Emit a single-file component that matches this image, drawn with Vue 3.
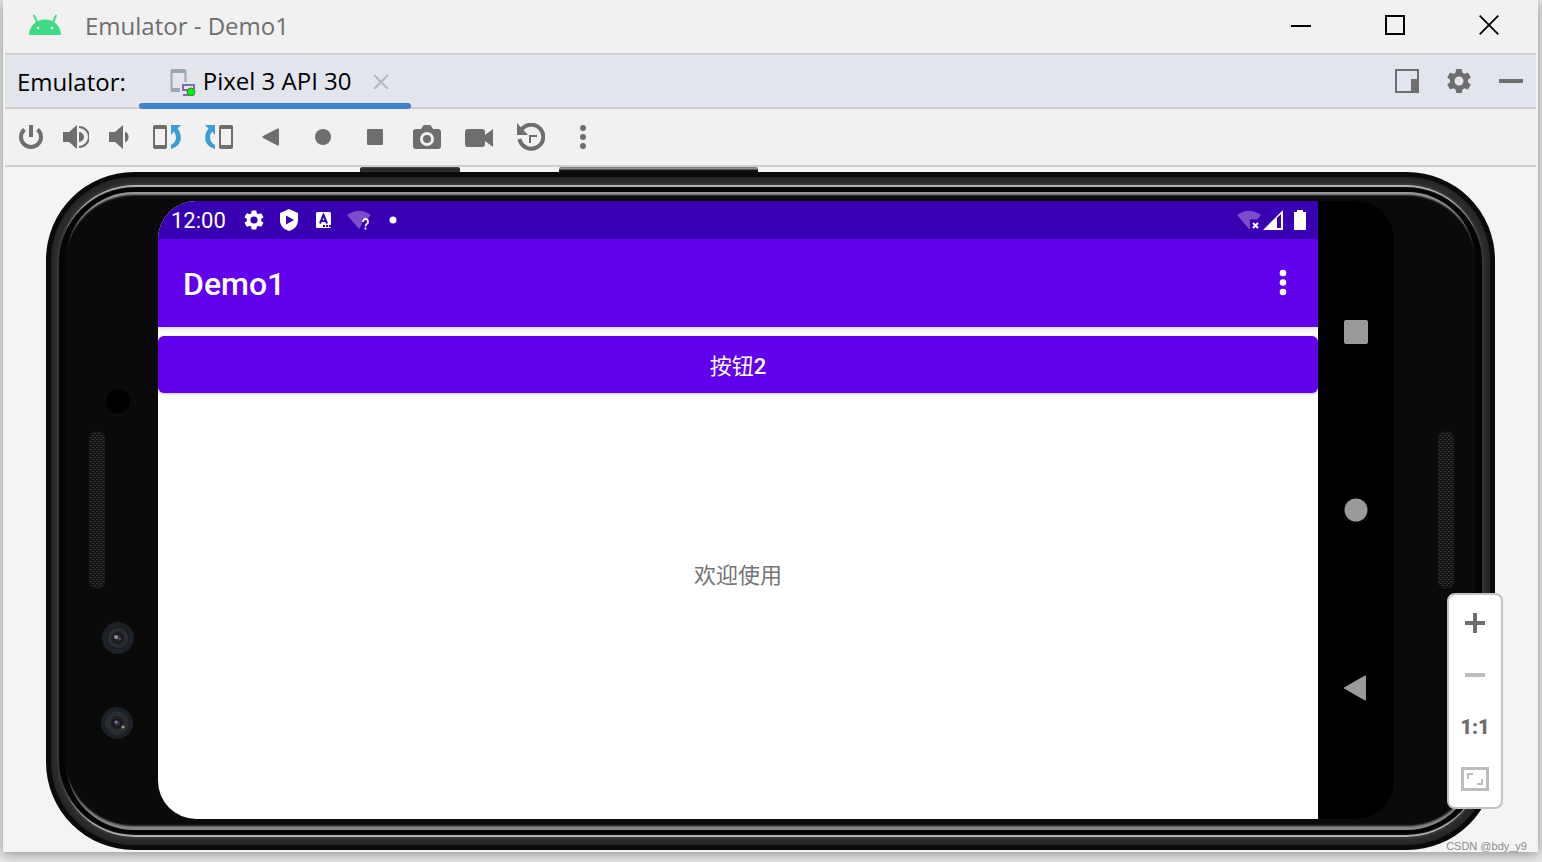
<script setup>
  import {ref} from "vue";

  const tabOpen = ref(true)
  const screenOn = ref(true)
  const deviceName = "Pixel 3 API 30"
</script>

<template>
  <main>
    <div class="window">
      <header class="titlebar">
        <svg class="logo" width="34" height="22" viewBox="0 0 34 22">
          <path d="M1 21a16 15.500 0 0 1 32 0z" fill="#3ddc84" />
          <path d="M9 8L6 1.500M25 8l3-6.500" stroke="#3ddc84" stroke-width="1.800" stroke-linecap="round" />
          <circle cx="10" cy="14" r="1.300" fill="#fff" />
          <circle cx="24" cy="14" r="1.300" fill="#fff" />
        </svg>
        <h1>Emulator - Demo1</h1>
        <div class="window-controls">
          <button aria-label="Minimize">
            <svg width="20" height="20" viewBox="0 0 20 20"><path d="M0 11h20" stroke="#000" stroke-width="2" /></svg>
          </button>
          <button aria-label="Maximize">
            <svg width="20" height="20" viewBox="0 0 20 20"><path d="M1 1h18v18H1z" fill="none" stroke="#000" stroke-width="2" /></svg>
          </button>
          <button aria-label="Close">
            <svg width="20" height="20" viewBox="0 0 20 20"><path d="M.7.7l18.600 18.600M19.300.7L.7 19.300" stroke="#000" stroke-width="1.800" /></svg>
          </button>
        </div>
      </header>

      <nav class="tabs">
        <span class="label">Emulator:</span>
        <div v-if="tabOpen" class="tab">
          <svg width="28" height="30" viewBox="0 0 28 30">
            <path d="M11 25H4a1.500 1.500 0 0 1-1.500-1.500v-18A1.500 1.500 0 0 1 4 4h11a1.500 1.500 0 0 1 1.500 1.500V16" fill="none" stroke="#9aa7b0" stroke-width="2" />
            <path d="M2 4h15v3H2zM2 22h9v4H2z" fill="#9aa7b0" />
            <path d="M14 19h11v4M14 18v6h5M14 29h6" fill="none" stroke="#8567b3" stroke-width="2" />
            <circle cx="22" cy="26" r="4" fill="#00f500" stroke="#4b7a4b" />
          </svg>
          <a href="#device">{{deviceName}}</a>
          <button aria-label="Close tab" @click="tabOpen = false">
            <svg width="16" height="16" viewBox="0 0 16 16"><path d="M1 2l14 14M15 2L1 16" stroke="#b3b8c2" stroke-width="2" /></svg>
          </button>
        </div>
        <div class="tab-actions">
          <button aria-label="View mode">
            <svg width="28" height="28" viewBox="0 0 28 28"><path d="M3 3h22v22H3z" fill="none" stroke="#6e6e6e" stroke-width="2" /><path d="M18 12h8v14h-8z" fill="#6e6e6e" /></svg>
          </button>
          <button aria-label="Settings">
            <svg width="30" height="30" viewBox="0 0 24 24"><path fill="#6e6e6e" d="M19.140 12.940c.04-.3.060-.61.060-.94 0-.32-.02-.64-.07-.94l2.030-1.580a.49.49 0 0 0 .12-.61l-1.920-3.320a.49.49 0 0 0-.59-.22l-2.390.96a7 7 0 0 0-1.620-.94l-.36-2.540a.48.48 0 0 0-.48-.41h-3.840a.47.47 0 0 0-.47.41l-.36 2.540c-.59.24-1.130.57-1.620.94l-2.390-.96a.48.48 0 0 0-.59.22L2.740 8.870a.47.47 0 0 0 .12.61l2.030 1.580c-.05.3-.09.63-.09.94s.02.64.07.94l-2.030 1.580a.49.49 0 0 0-.12.61l1.920 3.320c.12.22.37.29.59.22l2.390-.96c.5.38 1.030.7 1.620.94l.36 2.540c.05.24.24.41.48.41h3.840c.24 0 .44-.17.47-.41l.36-2.540c.59-.24 1.130-.56 1.620-.94l2.390.96c.22.08.47 0 .59-.22l1.920-3.320a.47.47 0 0 0-.12-.61zM12 15.600A3.600 3.600 0 1 1 12 8.400a3.600 3.600 0 0 1 0 7.200z" /></svg>
          </button>
          <button aria-label="Hide">
            <svg width="28" height="28" viewBox="0 0 28 28"><path d="M2 14h24" stroke="#6e6e6e" stroke-width="4" /></svg>
          </button>
        </div>
      </nav>

      <div class="toolbar">
        <div class="group">
          <button aria-label="Power" @click="screenOn = !screenOn">
            <svg width="28" height="28" viewBox="0 0 28 28" fill="none" stroke="#6e6e6e" stroke-width="4"><path d="M14 2v12" /><path d="M7.500 6.500a10 10 0 1 0 13 0" /></svg>
          </button>
          <button aria-label="Volume up">
            <svg width="28" height="28" viewBox="0 0 28 28"><path d="M2 9h6l8-7v24l-8-7H2zM18 9a5 5 0 0 1 0 10z" fill="#6e6e6e" /><path d="M18 4a10 10 0 0 1 0 20" fill="none" stroke="#6e6e6e" stroke-width="2" /></svg>
          </button>
          <button aria-label="Volume down">
            <svg width="28" height="28" viewBox="0 0 28 28"><path d="M4 9h6l8-7v24l-8-7H4zM20 8.500a6 6 0 0 1 0 11z" fill="#6e6e6e" /></svg>
          </button>
        </div>
        <div class="group wide">
          <button aria-label="Rotate left">
            <svg width="30" height="28" viewBox="0 0 30 28"><path d="M2 4h12v20H2z" fill="none" stroke="#6e6e6e" stroke-width="2" /><path d="M1 4a2 2 0 0 1 2-2h10a2 2 0 0 1 2 2v2H1zM1 22h14v2a2 2 0 0 1-2 2H3a2 2 0 0 1-2-2z" fill="#6e6e6e" /><path d="M19 2h10l-3.500 3.500c5 6 5.500 17-6.500 20.500v-4c6-3 6-9 3-13.500L19 12z" fill="#389fd6" /></svg>
          </button>
          <button aria-label="Rotate right">
            <svg width="30" height="28" viewBox="0 0 30 28"><path d="M16 4h12v20H16z" fill="none" stroke="#6e6e6e" stroke-width="2" /><path d="M15 4a2 2 0 0 1 2-2h10a2 2 0 0 1 2 2v2H15zM15 22h14v2a2 2 0 0 1-2 2H17a2 2 0 0 1-2-2z" fill="#6e6e6e" /><path d="M11 2H1l3.500 3.500C-.5 11.500-1 22.500 11 26v-4C5 19 5 13 8 8.500l3 3.500z" fill="#389fd6" /></svg>
          </button>
          <button aria-label="Back">
            <svg width="28" height="28" viewBox="0 0 28 28"><path d="M6.500 14L21 6.500v15z" fill="#6e6e6e" stroke="#6e6e6e" stroke-width="2" stroke-linejoin="round" /></svg>
          </button>
          <button aria-label="Home">
            <svg width="28" height="28" viewBox="0 0 28 28"><circle cx="14" cy="14" r="8" fill="#6e6e6e" /></svg>
          </button>
          <button aria-label="Overview">
            <svg width="28" height="28" viewBox="0 0 28 28"><rect x="6" y="6" width="16" height="16" rx="1" fill="#6e6e6e" /></svg>
          </button>
          <button aria-label="Screenshot">
            <svg width="28" height="28" viewBox="0 0 28 28"><path d="M3 6h5l2-3.200Q10.500 2 11.500 2h5q1 0 1.500.8L20 6h5a3 3 0 0 1 3 3v14a3 3 0 0 1-3 3H3a3 3 0 0 1-3-3V9a3 3 0 0 1 3-3z" fill="#6e6e6e" /><circle cx="14" cy="16" r="5.500" fill="#6e6e6e" stroke="#f1f1f1" stroke-width="3" /></svg>
          </button>
          <button aria-label="Record">
            <svg width="28" height="28" viewBox="0 0 28 28"><path d="M3 6h14a3 3 0 0 1 3 3v3l8-6v18l-8-6v3a3 3 0 0 1-3 3H3a3 3 0 0 1-3-3V9a3 3 0 0 1 3-3z" fill="#6e6e6e" /></svg>
          </button>
          <button aria-label="Snapshots">
            <svg width="28" height="28" viewBox="0 0 28 28"><path d="M4 7.500A12 12 0 1 1 2.500 16" fill="none" stroke="#6e6e6e" stroke-width="4" /><path d="M0 0l4 4.500 7 7.500H0z" fill="#6e6e6e" /><path d="M13 20v-7h7" fill="none" stroke="#6e6e6e" stroke-width="2" /></svg>
          </button>
          <button aria-label="More">
            <svg width="28" height="28" viewBox="0 0 28 28" fill="#6e6e6e"><circle cx="14" cy="5" r="3" /><circle cx="14" cy="14" r="3" /><circle cx="14" cy="23" r="3" /></svg>
          </button>
        </div>
      </div>

      <section class="stage">
        <div class="side-keys"><i class="power-key"></i><i class="volume-key"></i></div>
        <div class="phone">
          <div class="frame">
            <div class="rim">
              <div class="glass">
                <svg class="bezel" width="92" height="618" viewBox="0 0 92 618">
                  <defs>
                    <pattern id="mesh" width="4" height="4" patternUnits="userSpaceOnUse">
                      <rect width="4" height="4" fill="#131313" />
                      <path d="M0 0h2v1H0zM2 2h2v1H2z" fill="#393939" />
                    </pattern>
                    <radialGradient id="lens">
                      <stop offset="0" stop-color="#49495a" />
                      <stop offset=".35" stop-color="#17181d" />
                      <stop offset=".8" stop-color="#303134" />
                      <stop offset="1" stop-color="#15181b" />
                    </radialGradient>
                  </defs>
                  <circle cx="52" cy="200" r="12" fill="#000" />
                  <rect x="23.500" y="231" width="15" height="156" rx="6" fill="url(#mesh)" stroke="#1c1c1c" />
                  <circle cx="52" cy="437" r="16" fill="#1b2126" />
                  <circle cx="52" cy="437" r="11" fill="url(#lens)" />
                  <circle cx="50" cy="436" r="2" fill="#8d8d9c" />
                  <circle cx="54" cy="438" r="1" fill="#55557a" />
                  <circle cx="51" cy="522" r="16" fill="#1b2126" />
                  <circle cx="51" cy="522" r="11" fill="url(#lens)" stroke="#35383b" />
                  <circle cx="50" cy="521" r="1.500" fill="#8080b5" />
                  <circle cx="57" cy="526" r="1.500" fill="#ad9896" />
                </svg>
                <div class="screen">
                  <div class="statusbar">
                    <span class="clock">12:00</span>
                    <div class="notifications">
                      <svg width="24" height="24" viewBox="0 0 24 24"><path fill="#fff" d="M19.140 12.940c.04-.3.060-.61.060-.94 0-.32-.02-.64-.07-.94l2.030-1.580a.49.49 0 0 0 .12-.61l-1.920-3.320a.49.49 0 0 0-.59-.22l-2.390.96a7 7 0 0 0-1.620-.94l-.36-2.540a.48.48 0 0 0-.48-.41h-3.840a.47.47 0 0 0-.47.41l-.36 2.540c-.59.24-1.130.57-1.620.94l-2.390-.96a.48.48 0 0 0-.59.22L2.740 8.870a.47.47 0 0 0 .12.61l2.030 1.580c-.05.3-.09.63-.09.94s.02.64.07.94l-2.030 1.580a.49.49 0 0 0-.12.61l1.920 3.320c.12.22.37.29.59.22l2.390-.96c.5.38 1.030.7 1.620.94l.36 2.540c.05.24.24.41.48.41h3.840c.24 0 .44-.17.47-.41l.36-2.540c.59-.24 1.130-.56 1.620-.94l2.390.96c.22.08.47 0 .59-.22l1.920-3.320a.47.47 0 0 0-.12-.61zM12 15.600A3.600 3.600 0 1 1 12 8.400a3.600 3.600 0 0 1 0 7.200z" /></svg>
                      <svg width="24" height="24" viewBox="0 0 24 24"><path d="M12 1l9 4v7c0 6-4 9.500-9 11-5-1.500-9-5-9-11V5z" fill="#fff" /><path d="M9 7.500l8 4.500-8 4.500z" fill="#3700b3" /></svg>
                      <svg width="24" height="24" viewBox="0 0 24 24"><rect x="4" y="4" width="15" height="16" rx="1.500" fill="#fff" /><path d="M8 15.500L11.500 7l3.500 8.500M9.500 13h4" fill="none" stroke="#3700b3" stroke-width="2" /><path d="M11 17h2v2h-2zM14 17h2v2h-2zM17 17h2v2h-2z" fill="#3700b3" /></svg>
                      <svg width="24" height="24" viewBox="0 0 24 24"><path d="M0 7q12-8.500 24 0l-3 3.500h-6v6L12 21z" fill="#7c4ccd" /><path d="M16 14q0-3 2.500-3T21 14q0 1.300-1.500 2.300-1 .7-1 2M18.500 19.500v2" fill="none" stroke="#fff" stroke-width="1.800" /></svg>
                      <svg width="24" height="24" viewBox="0 0 24 24"><circle cx="11" cy="12" r="3.500" fill="#fff" /></svg>
                    </div>
                    <svg class="signals" width="70" height="24" viewBox="0 0 70 24">
                      <path d="M0 7q12-8.500 24 0l-4 4.500h-7v9.500h-1z" fill="#7c4ccd" />
                      <path d="M16 15l5 5M21 15l-5 5" stroke="#fff" stroke-width="2" />
                      <path d="M46 2v20H26z" fill="#fff" />
                      <path d="M40 10l4-4v14h-4z" fill="#3700b3" />
                      <path d="M57 4h3V2h6v2h3v18H57z" fill="#fff" />
                    </svg>
                  </div>
                  <div class="appbar">
                    <h2>Demo1</h2>
                    <button aria-label="More options">
                      <svg width="24" height="28" viewBox="0 0 24 28" fill="#fff"><circle cx="12" cy="4" r="3.300" /><circle cx="12" cy="13.500" r="3.300" /><circle cx="12" cy="23" r="3.300" /></svg>
                    </button>
                  </div>
                  <div class="content">
                    <button><span>按钮<b>2</b></span></button>
                    <p v-if="screenOn">欢迎使用</p>
                  </div>
                </div>
                <div class="navbar">
                  <button aria-label="Recent apps">
                    <svg width="26" height="26" viewBox="0 0 26 26"><rect x="1" y="1" width="24" height="24" rx="2" fill="#9a9a9a" /></svg>
                  </button>
                  <button aria-label="Device home">
                    <svg width="26" height="26" viewBox="0 0 26 26"><circle cx="13" cy="13" r="11.500" fill="#9a9a9a" /></svg>
                  </button>
                  <button aria-label="Device back">
                    <svg width="26" height="26" viewBox="0 0 26 26"><path d="M2 13L22 1.500v23z" fill="#9a9a9a" stroke="#9a9a9a" stroke-width="2" stroke-linejoin="round" /></svg>
                  </button>
                </div>
                <svg class="bezel" width="81" height="618" viewBox="0 0 81 618">
                  <rect x="44.500" y="231" width="15" height="156" rx="6" fill="url(#mesh)" stroke="#1c1c1c" />
                </svg>
              </div>
            </div>
          </div>
        </div>

        <div class="zoom">
          <button aria-label="Zoom in">
            <svg width="28" height="28" viewBox="0 0 28 28"><path d="M4 14h20M14 4v20" stroke="#6e6e6e" stroke-width="4" /></svg>
          </button>
          <button aria-label="Zoom out">
            <svg width="28" height="28" viewBox="0 0 28 28"><path d="M4 14h20" stroke="#bdbdbd" stroke-width="4" /></svg>
          </button>
          <button>1:1</button>
          <button aria-label="Fit">
            <svg width="28" height="28" viewBox="0 0 28 28" fill="none" stroke="#bdbdbd"><path d="M1.500 3.500h25v21h-25z" stroke-width="3" /><path d="M7 14V9h5M21 14v5h-5" stroke-width="2" /></svg>
          </button>
        </div>
        <small>CSDN @bdy_y9</small>
      </section>
    </div>
  </main>
</template>

<style>
  body {
    margin: 0;
    background-color: #e9e9e9;
  }
</style>

<style scoped>
  main {
    min-height: 100vh;
    padding: 0 4px 10px 3px;
    box-sizing: border-box;
    display: flex;
    font-family: "Open Sans", "Noto Sans CJK SC", sans-serif;
  }

  button {
    border: none;
    padding: 0;
    background: none;
    display: flex;
    align-items: center;
    justify-content: center;
    font-family: inherit;
    cursor: pointer;
  }

  svg {
    display: block;
    flex-shrink: 0;
  }

  .window {
    flex: 1;
    display: flex;
    flex-direction: column;
    padding: 0 2px;
    background-color: #f1f1f1;
    box-shadow: 0 2px 12px rgba(0, 0, 0, 0.4);
  }

  .titlebar {
    display: flex;
    align-items: center;
    height: 50px;
    padding: 0 0 3px 23px;
    border-bottom: 2px solid #d0d0d0;
  }

  h1 {
    margin: 0 0 0 23px;
    font-size: 24px;
    font-weight: 400;
    color: #6e6e6e;
  }

  .window-controls {
    display: flex;
    margin-left: auto;
  }

  .window-controls button {
    width: 94px;
    height: 50px;
  }

  .tabs {
    display: flex;
    height: 52px;
    padding: 0 11px 0 12px;
    background-color: #e2e5ec;
    border-bottom: 2px solid #d0d0d0;
    font-size: 24px;
    line-height: 54px;
  }

  .tab {
    display: flex;
    align-items: center;
    position: relative;
    margin-left: 13px;
    padding: 0 22px 0 30px;
  }

  .tab::after {
    content: "";
    position: absolute;
    left: 0;
    right: 0;
    bottom: -2px;
    height: 6px;
    border-radius: 3px;
    background-color: #4083c9;
  }

  .tab a {
    margin: 0 21px 0 6px;
    color: #000;
    text-decoration: none;
  }

  .tab-actions {
    display: flex;
    gap: 24px;
    margin-left: auto;
  }

  .tab-actions button {
    width: 28px;
  }

  .toolbar {
    display: flex;
    gap: 20px;
    height: 56px;
    padding-left: 12px;
    border-bottom: 2px solid #d0d0d0;
  }

  .group {
    display: flex;
    gap: 16px;
  }

  .wide {
    gap: 24px;
  }

  .group button {
    width: 28px;
  }

  .stage {
    flex: 1;
    display: flex;
    flex-direction: column;
    position: relative;
    padding: 0 41px 2px;
    background-color: #f4f4f4;
  }

  .side-keys {
    display: flex;
    gap: 99px;
    height: 5px;
    padding-left: 314px;
  }

  .side-keys i {
    width: 100px;
    border-radius: 2px 2px 0 0;
    background: linear-gradient(#555, #222 40%, #333);
  }

  .side-keys .volume-key {
    width: 199px;
    background: linear-gradient(#777, #999 40%, #111 60%);
  }

  .phone {
    flex: 1;
    display: flex;
    padding: 5px;
    border-radius: 88px;
    background-color: #0a0a0a;
  }

  .frame {
    flex: 1;
    display: flex;
    padding: 8px;
    border-radius: 83px;
    background-color: #2b2b2b;
    box-shadow: inset 0 0 4px #1a1a1a;
  }

  .rim {
    flex: 1;
    display: flex;
    padding: 7px;
    border-radius: 76px;
    background-color: #040404;
    box-shadow: inset 0 3px 1px -1px #b8b8b8, inset 0 -3px 1px -1px #b8b8b8, 0 0 0 2px #363636;
  }

  .glass {
    flex: 1;
    display: flex;
    padding: 9px 0 11px;
    border-radius: 68px;
    background-color: #0a0a0a;
    box-shadow: inset 0 5px 2px -2px #99999b, inset 0 -6px 2px -2px #858589;
  }

  .bezel {
    align-self: center;
  }

  .screen {
    flex: 1;
    display: flex;
    flex-direction: column;
    overflow: hidden;
    border-radius: 38px 0 0 38px;
    background-color: #fff;
    font-family: Roboto, "Noto Sans CJK SC", sans-serif;
  }

  .statusbar {
    display: flex;
    align-items: center;
    height: 38px;
    padding: 0 11px 0 13px;
    background-color: #3700b3;
  }

  .clock {
    font-size: 22px;
    color: #fff;
  }

  .notifications {
    display: flex;
    gap: 11px;
    margin-left: 16px;
  }

  .signals {
    margin-left: auto;
  }

  .appbar {
    display: flex;
    align-items: center;
    justify-content: space-between;
    height: 88px;
    padding: 0 23px 0 25px;
    background-color: #6200ee;
    box-shadow: 0 2px 5px rgba(0, 0, 0, 0.15);
  }

  h2 {
    margin: 0;
    padding-top: 2px;
    font-size: 32px;
    font-weight: 500;
    color: #fff;
  }

  .content {
    flex: 1;
    display: grid;
  }

  .content button, .content p {
    grid-area: 1 / 1;
    font-size: 22px;
  }

  .content button {
    align-self: start;
    height: 57px;
    margin-top: 9px;
    padding-bottom: 2px;
    border-radius: 6px;
    background-color: #6200ee;
    box-shadow: 0 1px 3px rgba(0, 0, 0, 0.25);
    color: #fff;
  }

  .content b {
    font-weight: 500;
  }

  .content p {
    place-self: center;
    margin: 0;
    color: #757575;
  }

  .navbar {
    display: flex;
    flex-direction: column;
    justify-content: space-around;
    align-items: center;
    width: 76px;
    padding: 42px 0;
    box-sizing: border-box;
    border-radius: 0 38px 38px 0;
    background-color: #000;
  }

  .zoom {
    position: absolute;
    right: 33px;
    bottom: 43px;
    padding: 2px 0;
    width: 52px;
    border: 2px solid #c2c2c2;
    border-radius: 8px;
    background-color: #fff;
  }

  .zoom button {
    width: 52px;
    height: 52px;
    font-family: Roboto, sans-serif;
    font-size: 20px;
    font-weight: 900;
    color: #6e6e6e;
  }

  small {
    position: absolute;
    right: 9px;
    bottom: -2px;
    font-family: "Liberation Sans", sans-serif;
    font-size: 11px;
    line-height: 16px;
    color: #8c8c8c;
  }
</style>
